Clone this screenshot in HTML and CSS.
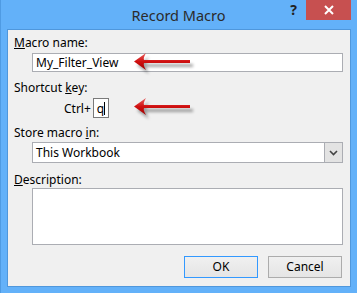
FILE: index.html
```html
<!DOCTYPE html>
<html>
<head>
<meta charset="utf-8">
<link rel="stylesheet" href="styles.css">
</head>
<body>
<div class="window">
  <div class="titlebar">
    <div></div>
    <div class="title">Record Macro</div>
    <div class="controls">
      <span class="help">?</span>
      <span class="close">
        <svg width="12" height="12" viewBox="0 0 12 12"><path d="M2 2 L10 10 M10 2 L2 10" stroke="#fff" stroke-width="2" fill="none"/></svg>
      </span>
    </div>
  </div>
  <div class="client">
    <div class="label l1"><u>M</u>acro name:</div>
    <div class="field input1">My_Filter_View</div>
    <div class="label l2">Shortcut <u>k</u>ey:</div>
    <div class="ctrlrow">
      <span class="ctrl">Ctrl+</span>
      <span class="keybox">q<span class="caret"></span></span>
    </div>
    <div class="label l3">Store macro <u>i</u>n:</div>
    <div class="field select">
      <span class="seltext">This Workbook</span>
      <span class="dropbtn">
        <svg width="9" height="6" viewBox="0 0 9 6"><path d="M1 1 L4.5 4.5 L8 1" stroke="#444" stroke-width="1.6" fill="none"/></svg>
      </span>
    </div>
    <div class="label l4"><u>D</u>escription:</div>
    <div class="field textarea"></div>
    <div class="buttons">
      <div class="btn ok">OK</div>
      <div class="btn">Cancel</div>
    </div>
    <svg class="arrow a1" width="64" height="28" viewBox="0 0 64 28">
      <defs>
        <linearGradient id="rg" x1="0" y1="0" x2="0" y2="1">
          <stop offset="0" stop-color="#e86060"/>
          <stop offset="0.5" stop-color="#d01010"/>
          <stop offset="1" stop-color="#a00000"/>
        </linearGradient>
      </defs>
      <path d="M2 10.5 L14 2 Q11 7 12 9 L58 9 L58 12 L12 12 Q11 14 14 19 Z" fill="url(#rg)"/>
    </svg>
    <svg class="arrow a2" width="64" height="28" viewBox="0 0 64 28">
      <path d="M2 10.5 L14 2 Q11 7 12 9 L58 9 L58 12 L12 12 Q11 14 14 19 Z" fill="url(#rg)"/>
    </svg>
  </div>
</div>
</body>
</html>
```
FILE: styles.css
```css
html, body {
  margin: 0;
  padding: 0;
}
body {
  font-family: "Noto Sans", "Open Sans", sans-serif;
  font-size: 12px;
  color: #000;
}
.window {
  width: 357px;
  height: 293px;
  box-sizing: border-box;
  background: #63b1f9;
  border-left: 1px solid #4f9be3;
  position: relative;
}
.titlebar {
  height: 29px;
  display: grid;
  grid-template-columns: 1fr auto 1fr;
  align-items: start;
}
.title {
  font-size: 14.5px;
  color: #2b2b2b;
  padding-top: 5px;
  line-height: 20px;
  margin-left: -1px;
}
.controls {
  justify-self: end;
  display: flex;
  align-items: start;
  margin-right: 6px;
}
.help {
  font-weight: bold;
  font-size: 14px;
  color: #222;
  line-height: 18px;
  margin-top: 1px;
  margin-right: 9px;
}
.close {
  width: 45px;
  height: 20px;
  background: #c75050;
  display: flex;
  align-items: center;
  justify-content: center;
}
.client {
  margin-left: 6px;
  width: 344px;
  height: 258px;
  box-sizing: border-box;
  border: 1px solid #4f97dc;
  background: #f0f0f0;
  padding: 5px 7px 0 6px;
  position: relative;
}
.label {
  line-height: 16px;
  height: 16px;
}
.field {
  margin-left: 18px;
  background: #fff;
  border: 1px solid #abadb3;
  box-sizing: border-box;
}
.input1 {
  margin-top: 2px;
  height: 19px;
  line-height: 17px;
  padding-left: 3px;
}
.l2 { margin-top: 8px; }
.ctrlrow {
  margin-top: 2px;
  display: flex;
  align-items: center;
  height: 20px;
  padding-left: 50px;
}
.ctrl {
  margin-right: 2px;
}
.keybox {
  width: 16px;
  height: 20px;
  box-sizing: border-box;
  border: 1px solid #7a7a7a;
  background: #fff;
  line-height: 17px;
  padding-left: 3px;
  display: flex;
  align-items: center;
}
.caret {
  width: 1px;
  height: 13px;
  background: #000;
}
.l3 { margin-top: 7px; }
.select {
  margin-top: 1px;
  height: 21px;
  display: flex;
  align-items: stretch;
}
.seltext {
  flex: 1;
  line-height: 19px;
  padding-left: 3px;
}
.dropbtn {
  width: 17px;
  background: #e3e3e3;
  border-left: 1px solid #abadb3;
  display: flex;
  align-items: center;
  justify-content: center;
}
.l4 { margin-top: 9px; }
.textarea {
  height: 57px;
}
.buttons {
  margin-top: 11px;
  display: flex;
  justify-content: flex-end;
  gap: 10px;
  margin-right: 1px;
}
.btn {
  width: 74px;
  height: 22px;
  box-sizing: border-box;
  border: 1px solid #acacac;
  background: linear-gradient(#f0f0f0, #e5e5e5);
  text-align: center;
  line-height: 20px;
}
.btn.ok {
  border-color: #3399ff;
}
.arrow {
  position: absolute;
  left: 124px;
  filter: drop-shadow(3px 4px 1.5px rgba(0,0,0,0.35));
}
.a1 { top: 21px; }
.a2 { top: 66px; }
```
